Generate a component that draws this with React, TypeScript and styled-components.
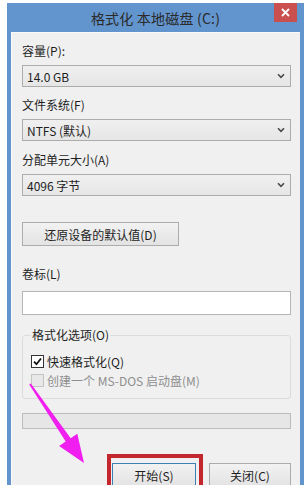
import React from "react";
import styled, { createGlobalStyle } from "styled-components";

const GlobalStyle = createGlobalStyle`
  html, body {
    margin: 0;
    padding: 0;
    background: #ffffff;
  }
  body {
    font-family: "Noto Sans CJK SC", "Noto Sans", sans-serif;
    font-size: 12px;
    color: #1e1e1e;
  }
`;

const Page = styled.div`
  position: relative;
  width: 306px;
  height: 485px;
  overflow: hidden;
  padding-top: 3px;
  box-sizing: border-box;
`;

const Window = styled.div`
  margin-left: 7px;
  width: 297px;
  height: 500px;
  background: #6294cd;
  padding: 0 4px;
  box-sizing: border-box;
`;

const TitleBar = styled.div`
  position: relative;
  height: 29px;
  display: flex;
  align-items: center;
  justify-content: center;
`;

const Title = styled.div`
  font-size: 14px;
  color: #2a2a2a;
  letter-spacing: 0.2px;
  margin-top: 1px;
`;

const CloseBtn = styled.div`
  position: absolute;
  top: 0;
  right: 3px;
  width: 23px;
  height: 19px;
  background: #c9504f;
  display: flex;
  align-items: center;
  justify-content: center;
`;

const Content = styled.div`
  background: #f0f0f0;
  border-top: 1px solid #fafafa;
  border-left: 1px solid #fafafa;
  padding: 10px 9px 0 10px;
  height: 480px;
  box-sizing: border-box;
`;

const Label = styled.div<{ $top: number }>`
  line-height: 16px;
  margin-top: ${(p) => p.$top}px;
`;

const Dropdown = styled.div`
  margin-top: 6px;
  height: 22px;
  border: 1px solid #acacac;
  background: linear-gradient(#f0f0f0, #e6e6e6);
  box-sizing: border-box;
  display: flex;
  align-items: center;
  justify-content: space-between;
  padding: 0 5px 0 4px;
`;

const PushButton = styled.div<{ $width: number; $primary?: boolean }>`
  width: ${(p) => p.$width}px;
  height: 24px;
  box-sizing: border-box;
  border: 1px solid ${(p) => (p.$primary ? "#3c7fb1" : "#acacac")};
  background: linear-gradient(#f2f2f2, #e3e3e3);
  display: flex;
  align-items: center;
  justify-content: center;
  color: #1e1e1e;
`;

const ResetRow = styled.div`
  margin-top: 26px;
`;

const TextInput = styled.div`
  margin-top: 9px;
  height: 24px;
  border: 1px solid #b5b5b5;
  background: #ffffff;
  box-sizing: border-box;
`;

const Group = styled.fieldset`
  margin: 13px 0 0 0;
  padding: 0 8px 8px 8px;
  border: 1px solid #dcdcdc;
  border-radius: 3px;
  min-width: 0;
`;

const Legend = styled.legend`
  padding: 0 1px;
  line-height: 14px;
  font-size: 12px;
`;

const CheckRow = styled.div<{ $disabled?: boolean }>`
  display: flex;
  align-items: center;
  gap: 3px;
  height: 19px;
  color: ${(p) => (p.$disabled ? "#8e8e8e" : "#1e1e1e")};
  &:first-of-type {
    margin-top: 10px;
  }
`;

const Box = styled.span<{ $disabled?: boolean }>`
  width: 13px;
  height: 13px;
  box-sizing: border-box;
  border: 1px solid ${(p) => (p.$disabled ? "#c4c4c4" : "#333333")};
  background: ${(p) => (p.$disabled ? "#e8e8e8" : "#ffffff")};
  display: flex;
  align-items: center;
  justify-content: center;
`;

const Progress = styled.div`
  margin-top: 14px;
  height: 16px;
  border: 1px solid #bcbcbc;
  background: #e6e6e6;
  box-sizing: border-box;
`;

const ButtonRow = styled.div`
  margin-top: 34px;
  display: flex;
  justify-content: flex-end;
  gap: 13px;
  padding-right: 0;
`;

const Highlight = styled.div`
  position: relative;
  &::after {
    content: "";
    position: absolute;
    inset: -9px -7px -9px -5px;
    border: 4px solid #c3262c;
    pointer-events: none;
  }
`;

const Overlay = styled.svg`
  position: absolute;
  left: 0;
  top: 0;
  pointer-events: none;
`;

const Chevron = () => (
  <svg width="8" height="6" viewBox="0 0 8 6">
    <path d="M1 1.2 L4 4.3 L7 1.2" fill="none" stroke="#4a4a4a" strokeWidth="1.6" />
  </svg>
);

const Select = ({ value }: { value: string }) => (
  <Dropdown>
    <span>{value}</span>
    <Chevron />
  </Dropdown>
);

export default function App() {
  return (
    <>
      <GlobalStyle />
      <Page>
        <Window>
          <TitleBar>
            <Title>格式化 本地磁盘 (C:)</Title>
            <CloseBtn>
              <svg width="9" height="9" viewBox="0 0 9 9">
                <path d="M1 1 L8 8 M8 1 L1 8" stroke="#ffffff" strokeWidth="1.8" />
              </svg>
            </CloseBtn>
          </TitleBar>
          <Content>
            <Label $top={0}>容量(P):</Label>
            <Select value="14.0 GB" />
            <Label $top={10}>文件系统(F)</Label>
            <Select value="NTFS (默认)" />
            <Label $top={11}>分配单元大小(A)</Label>
            <Select value="4096 字节" />
            <ResetRow>
              <PushButton $width={157}>还原设备的默认值(D)</PushButton>
            </ResetRow>
            <Label $top={20}>卷标(L)</Label>
            <TextInput />
            <Group>
              <Legend>格式化选项(O)</Legend>
              <CheckRow>
                <Box>
                  <svg width="9" height="9" viewBox="0 0 9 9">
                    <path d="M1 4.6 L3.5 7.2 L8 1.5" fill="none" stroke="#111" strokeWidth="1.8" />
                  </svg>
                </Box>
                快速格式化(Q)
              </CheckRow>
              <CheckRow $disabled>
                <Box $disabled />
                创建一个 MS-DOS 启动盘(M)
              </CheckRow>
            </Group>
            <Progress />
            <ButtonRow>
              <Highlight>
                <PushButton $width={84} $primary>
                  开始(S)
                </PushButton>
              </Highlight>
              <PushButton $width={82}>关闭(C)</PushButton>
            </ButtonRow>
          </Content>
        </Window>
        <Overlay width="306" height="485" viewBox="0 0 306 485">
          <polygon
            points="30.8,383.4 70.7,438.2 77.3,433.7 84,463 59.1,446.1 65.7,441.6 29.2,384.6"
            fill="#f01ff0"
          />
        </Overlay>
      </Page>
    </>
  );
}
